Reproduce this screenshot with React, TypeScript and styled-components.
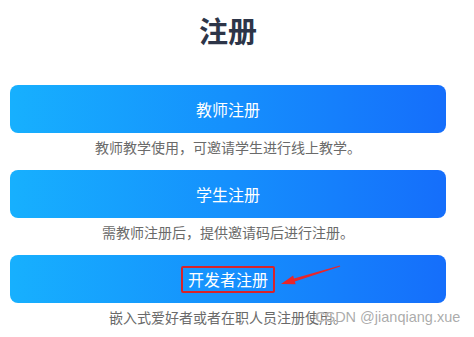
import React from 'react';
import styled, { createGlobalStyle } from 'styled-components';

type Option = {
  label: string;
  desc: string;
  marked?: boolean;
};

const options: Option[] = [
  { label: '教师注册', desc: '教师教学使用，可邀请学生进行线上教学。' },
  { label: '学生注册', desc: '需教师注册后，提供邀请码后进行注册。' },
  { label: '开发者注册', desc: '嵌入式爱好者或者在职人员注册使用。', marked: true },
];

const GlobalStyle = createGlobalStyle`
  body {
    margin: 0;
    background: #fff;
    font-family: "Noto Sans CJK SC", "Noto Sans", sans-serif;
  }
`;

const App = (): React.ReactElement => {
  return (
    <>
      <GlobalStyle />
      <Page>
        <Title>注册</Title>
        {options.map((opt) => (
          <Item key={opt.label}>
            <RegBtn>
              <Label $marked={opt.marked}>{opt.label}</Label>
              {opt.marked && (
                <Arrow width="66" height="26" viewBox="0 0 66 26">
                  <path
                    d="M3 21 L15.1 12.6 L16 15.4 L61.9 2.4 L62.2 3.6 L16.8 18.4 L17.7 21.2 Z"
                    fill="#e8262b"
                  />
                </Arrow>
              )}
            </RegBtn>
            <Desc>{opt.desc}</Desc>
          </Item>
        ))}
        <Watermark>CSDN @jianqiang.xue</Watermark>
      </Page>
    </>
  );
};

const Page = styled.div`
  position: relative;
  height: 337px;
  padding: 12px 28px 0 10px;
  box-sizing: border-box;
  display: flex;
  flex-direction: column;
  overflow: hidden;
`;

const Title = styled.h1`
  margin: 0 0 37px;
  font-size: 29px;
  line-height: 36px;
  font-weight: 700;
  color: #2d3548;
  text-align: center;
`;

const Item = styled.div`
  display: flex;
  flex-direction: column;
  margin-bottom: 12px;
`;

const RegBtn = styled.div`
  position: relative;
  height: 48px;
  border-radius: 8px;
  background: linear-gradient(90deg, #17b0fe 0%, #1590fd 50%, #156efb 100%);
  display: flex;
  align-items: center;
  justify-content: center;
  cursor: pointer;
`;

const Label = styled.span<{ $marked?: boolean }>`
  color: #fff;
  font-size: 16px;
  line-height: 19px;
  padding: ${(p) => (p.$marked ? '2px 5px' : '0')};
  border: ${(p) => (p.$marked ? '2px solid #d8232a' : 'none')};
  border-radius: 2px;
`;

const Arrow = styled.svg`
  position: absolute;
  left: 268px;
  top: 8px;
`;

const Desc = styled.p`
  margin: 3px 0 0;
  font-size: 14px;
  line-height: 22px;
  color: #6a6a6a;
  text-align: center;
`;

const Watermark = styled.span`
  position: absolute;
  left: 315px;
  top: 309px;
  font-family: "Liberation Sans", Arial, sans-serif;
  font-size: 14.5px;
  color: rgba(150, 150, 150, 0.8);
  text-shadow: 0 0 2px #fff, 0 0 1px #fff;
  white-space: nowrap;
`;

export default App;
